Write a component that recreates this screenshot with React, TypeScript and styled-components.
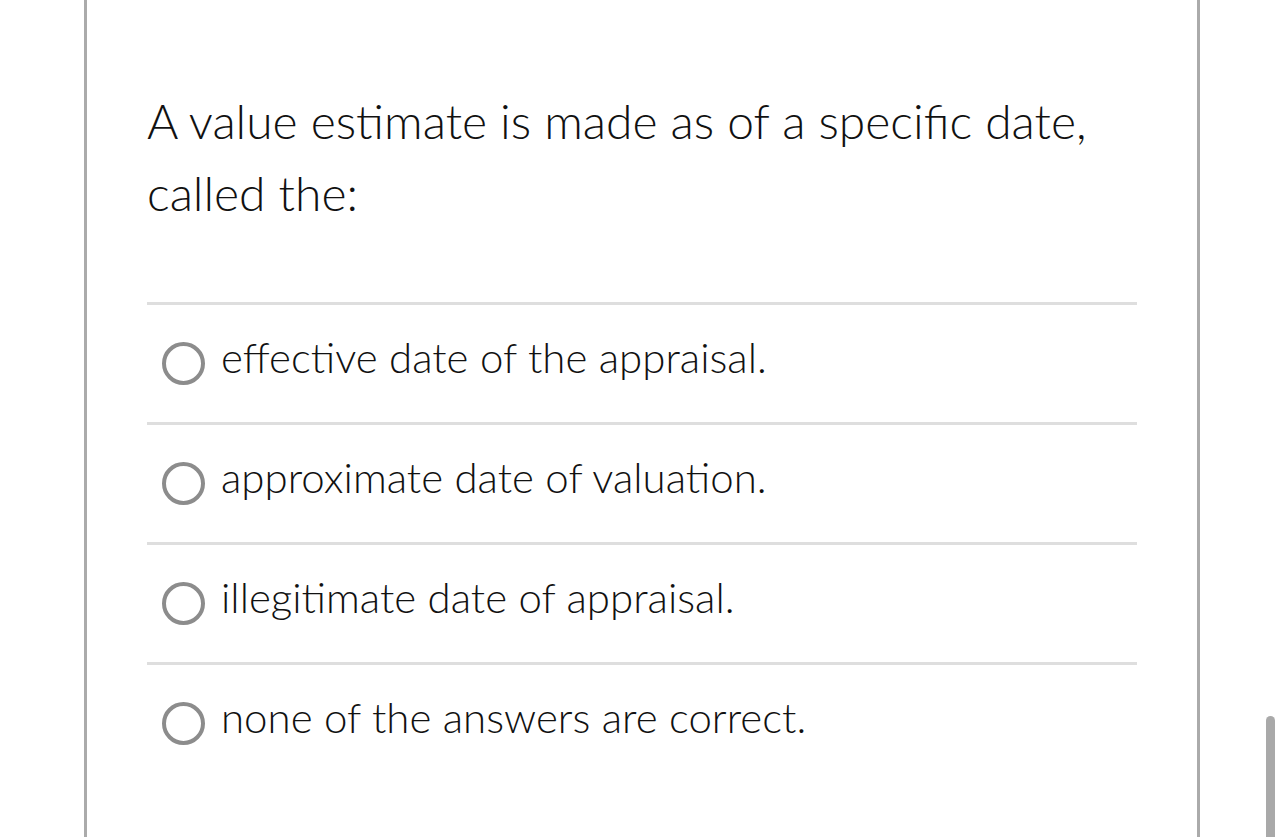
import React from "react";
import styled, { createGlobalStyle } from "styled-components";

const GlobalStyle = createGlobalStyle`
  html, body {
    margin: 0;
    padding: 0;
    background: #ffffff;
    overflow: hidden;
  }
  body {
    font-family: Lato, "Noto Sans", sans-serif;
    color: #111111;
  }
`;

const Page = styled.div`
  display: flex;
  min-height: 100vh;
  padding-left: 84px;
`;

const Card = styled.div`
  width: 1116px;
  box-sizing: border-box;
  min-height: 100vh;
  border-left: 3px solid #ababab;
  border-right: 3px solid #ababab;
  padding: 85px 60px 0 60px;
`;

const Question = styled.p`
  margin: 0 0 73px 0;
  font-size: 48px;
  font-weight: 300;
  line-height: 72px;
`;

const Options = styled.div`
  display: flex;
  flex-direction: column;
`;

const OptionRow = styled.label`
  display: flex;
  align-items: center;
  gap: 16px;
  height: 117px;
  padding-left: 15px;
  border-top: 3px solid #dedede;
  cursor: pointer;
`;

const Radio = styled.span`
  width: 43px;
  height: 43px;
  box-sizing: border-box;
  border: 4px solid #8c8c8c;
  border-radius: 50%;
  flex-shrink: 0;
`;

const OptionText = styled.span`
  font-size: 42px;
  font-weight: 300;
  line-height: 1.2;
  padding-bottom: 13px;
`;

const ScrollThumb = styled.div`
  position: fixed;
  right: 9px;
  top: 716px;
  bottom: 0;
  width: 9px;
  border-radius: 5px 5px 0 0;
  background: #a9a9a9;
`;

const answers = [
  "effective date of the appraisal.",
  "approximate date of valuation.",
  "illegitimate date of appraisal.",
  "none of the answers are correct.",
];

export default function App() {
  return (
    <>
      <GlobalStyle />
      <Page>
        <Card>
          <Question>
            A value estimate is made as of a specific date,
            <br />
            called the:
          </Question>
          <Options>
            {answers.map((a) => (
              <OptionRow key={a}>
                <Radio />
                <OptionText>{a}</OptionText>
              </OptionRow>
            ))}
          </Options>
        </Card>
      </Page>
      <ScrollThumb />
    </>
  );
}
